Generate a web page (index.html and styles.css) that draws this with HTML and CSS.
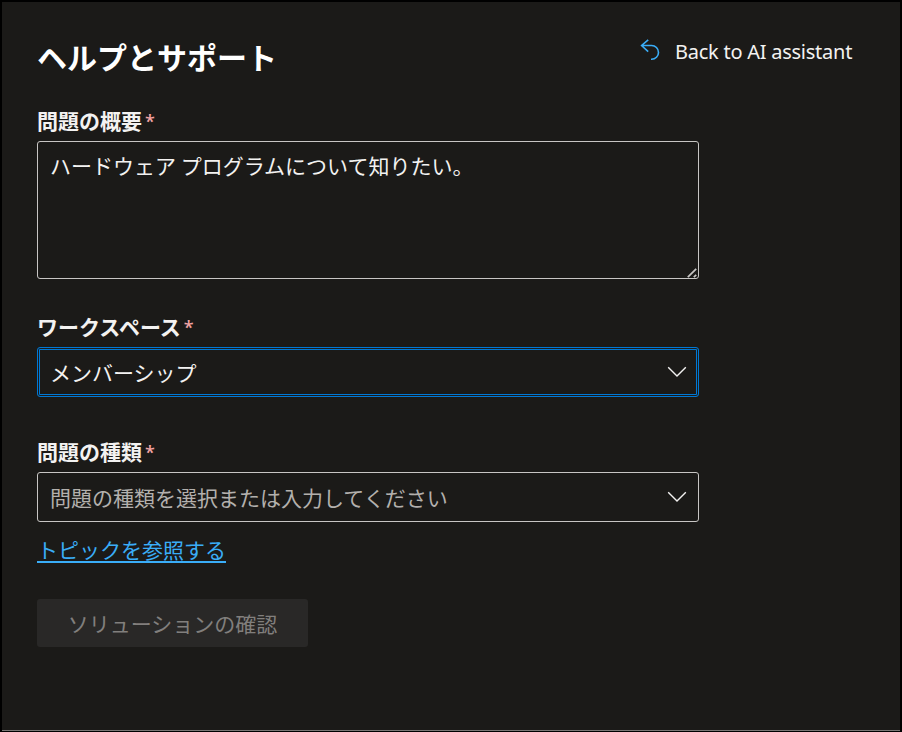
FILE: index.html
```html
<!DOCTYPE html>
<html lang="ja">
<head>
  <meta charset="UTF-8">
  <meta name="viewport" content="width=device-width, initial-scale=1.0">
  <title>ヘルプとサポート</title>
  <link rel="stylesheet" href="styles.css">
</head>
<body>

<main class="panel">
  <header class="panel-header">
    <h1>ヘルプとサポート</h1>
    <a class="back-link" href="#">
      <svg width="20" height="22" viewBox="0 0 20 22" fill="none" stroke="#3aadf7" stroke-width="1.6">
        <path d="M8.2 0.8 L1.6 6.5 L8.2 12.6 M1.6 6.5 H11.6 A6.9 6.9 0 0 1 11.6 20.3 H11"/>
      </svg>
      <span>Back to AI assistant</span>
    </a>
  </header>

  <form class="support-form">
    <div class="field field-summary">
      <label for="summary">問題の概要<span class="required">*</span></label>
      <div class="textarea-wrap">
        <textarea id="summary">ハードウェア プログラムについて知りたい。</textarea>
        <svg class="grip" width="10" height="10" viewBox="0 0 10 10" fill="none" stroke="#c8c6c4" stroke-width="1.7">
          <path d="M0.8 9.2 L9.2 0.8 M6.8 9.2 L9.2 6.8"/>
        </svg>
      </div>
    </div>

    <div class="field field-workspace">
      <label for="workspace">ワークスペース<span class="required">*</span></label>
      <div class="combo active">
        <input id="workspace" type="text" value="メンバーシップ">
        <svg width="20" height="12" viewBox="0 0 20 12" fill="none" stroke="#f3f2f1" stroke-width="1.4">
          <path d="M1.2 1.3 L10 10.1 L18.8 1.3"/>
        </svg>
      </div>
    </div>

    <div class="field">
      <label for="type">問題の種類<span class="required">*</span></label>
      <div class="combo">
        <input id="type" type="text" placeholder="問題の種類を選択または入力してください">
        <svg width="20" height="12" viewBox="0 0 20 12" fill="none" stroke="#f3f2f1" stroke-width="1.4">
          <path d="M1.2 1.3 L10 10.1 L18.8 1.3"/>
        </svg>
      </div>
    </div>

    <a class="topics" href="#">トピックを参照する</a>
    <button class="submit" type="button" disabled>ソリューションの確認</button>
  </form>
</main>

</body>
</html>
```
FILE: styles.css
```css
* {
  box-sizing: border-box;
}
body {
  margin: 0;
  background: #000;
  color: #f3f2f1;
  color-scheme: dark;
  font-family: 'Noto Sans CJK JP', sans-serif;
  font-size: 21px;
}
.panel {
  height: 731px;
  margin: 0 2px 1px;
  padding: 34px 48px 0 35px;
  background: #1b1a18;
  border-top: 2px solid #000;
  border-bottom: 1px solid #797775;
}
.panel-header {
  display: flex;
  justify-content: space-between;
  height: 68px;
}
h1 {
  margin: 0;
  color: #fff;
  font-size: 30px;
  line-height: 40px;
}
.back-link {
  display: flex;
  gap: 15px;
  height: 28px;
  margin-top: 1px;
  color: #f3f2f1;
  font-family: 'Noto Sans', 'Open Sans', sans-serif;
  font-size: 20px;
  letter-spacing: -0.25px;
  line-height: 30px;
  text-decoration: none;
}
.back-link span {
  width: 177px;
  white-space: nowrap;
}
.back-link svg {
  margin-top: 2px;
}
.support-form {
  display: flex;
  flex-direction: column;
  align-items: flex-start;
  width: 662px;
}
.field {
  width: 100%;
}
.field-summary {
  margin-bottom: 31px;
}
.field-workspace {
  margin-bottom: 38px;
}
label {
  display: block;
  height: 37px;
  padding-top: 1px;
  font-weight: 700;
  line-height: 30px;
}
.required {
  margin-left: 3px;
  color: #f1a3a3;
  font-family: 'Open Sans', sans-serif;
  font-size: 18px;
  font-weight: 600;
  line-height: 1;
  vertical-align: 1px;
}
.textarea-wrap {
  position: relative;
}
textarea {
  display: block;
  width: 100%;
  height: 138px;
  padding: 8px 12px;
  background: #1b1a18;
  border: 1px solid #c8c6c4;
  border-radius: 3px;
  color: #f3f2f1;
  font: inherit;
  line-height: 30px;
  outline: none;
  resize: none;
}
.grip {
  position: absolute;
  right: 2px;
  bottom: 1px;
}
.combo {
  display: flex;
  align-items: center;
  height: 50px;
  padding: 0 11px 0 12px;
  border: 1px solid #c8c6c4;
  border-radius: 3px;
}
.combo.active {
  border-color: #0078d4;
  box-shadow: inset 0 0 0 1px #1b1a18, inset 0 0 0 2px #0078d4;
}
.combo input {
  flex: 1;
  min-width: 0;
  padding: 0;
  background: none;
  border: none;
  color: #f3f2f1;
  font: inherit;
  outline: none;
}
.combo input::placeholder {
  color: #b3b0ad;
}
.topics {
  margin-top: 12px;
  color: #3aadf7;
  line-height: 30px;
  text-decoration-thickness: 2px;
  text-underline-offset: 3px;
}
.submit {
  width: 271px;
  height: 48px;
  margin-top: 35px;
  padding: 0;
  background: #292827;
  border: none;
  border-radius: 3px;
  color: #817f7d;
  font: inherit;
}
```
